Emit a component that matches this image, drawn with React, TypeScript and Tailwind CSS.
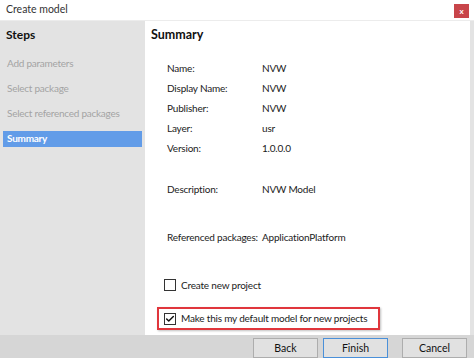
import { Check } from 'lucide-react';

const fields = [
  { label: 'Name:', value: 'NVW' },
  { label: 'Display Name:', value: 'NVW' },
  { label: 'Publisher:', value: 'NVW' },
  { label: 'Layer:', value: 'usr' },
  { label: 'Version:', value: '1.0.0.0' },
];

const steps = ['Add parameters', 'Select package', 'Select referenced packages'];

function Checkbox({ checked }: { checked?: boolean }) {
  return (
    <span className="w-[12px] h-[12px] border border-[#333] bg-white flex items-center justify-center shrink-0">
      {checked && <Check className="w-[10px] h-[10px] text-[#111]" strokeWidth={3.5} />}
    </span>
  );
}

function Button({ label, primary }: { label: string; primary?: boolean }) {
  return (
    <button
      className={
        'w-[65px] h-[20px] bg-[#e1e1e1] text-[10.5px] text-[#111] leading-none ' +
        (primary ? 'border border-[#4a90d9]' : 'border border-[#adadad]')
      }
    >
      {label}
    </button>
  );
}

export default function App() {
  return (
    <div
      className="w-[474px] h-[361px] bg-white flex flex-col text-[#1b1b1b] overflow-hidden whitespace-nowrap"
      style={{ fontFamily: 'Lato, "Open Sans", sans-serif' }}
    >
      <div className="h-[21px] flex items-center justify-between pl-[6px] pr-[5px] border-b border-[#ececec]">
        <span className="text-[10.5px] text-[#333]">Create model</span>
        <span className="w-[15px] h-[14px] bg-[#c8454a] text-white text-[8px] font-bold flex items-center justify-center leading-none mt-[2px]">
          x
        </span>
      </div>

      <div className="flex-1 flex min-h-0">
        <aside className="w-[145px] bg-[#e3e3e3] pt-[6px]">
          <h2 className="pl-[6px] text-[12px] font-bold leading-[16px] text-[#111]">Steps</h2>
          <ul className="mt-[8px] text-[10px] tracking-[-0.25px]">
            {steps.map((s) => (
              <li key={s} className="h-[25px] flex items-center pl-[7px] text-[#a3a3a3]">
                {s}
              </li>
            ))}
            <li className="h-[25px] flex items-center px-[3px]">
              <span className="w-full h-[16px] bg-[#629ce8] text-white font-bold flex items-center pl-[4px]">
                Summary
              </span>
            </li>
          </ul>
        </aside>

        <main className="flex-1 bg-white pt-[6px] text-[10px] tracking-[-0.2px]">
          <h2 className="pl-[6px] text-[12.5px] font-bold leading-[16px] text-[#111] tracking-normal">Summary</h2>
          <div className="pl-[22px] mt-[15px]">
            {fields.map((f) => (
              <div key={f.label} className="h-[20px] flex items-center">
                <span className="w-[95px]">{f.label}</span>
                <span>{f.value}</span>
              </div>
            ))}
            <div className="h-[20px] flex items-center mt-[21px]">
              <span className="w-[95px]">Description:</span>
              <span>NVW Model</span>
            </div>
            <div className="h-[20px] flex items-center mt-[28px]">
              <span className="w-[95px]">Referenced packages:</span>
              <span>ApplicationPlatform</span>
            </div>
          </div>

          <div className="pl-[19px] mt-[28px] h-[20px] flex items-center gap-[5px]">
            <Checkbox />
            <span>Create new project</span>
          </div>

          <div className="ml-[12px] mt-[12px] w-[223px] h-[23px] border-2 border-[#e0363c] shadow-[1px_1px_2px_rgba(0,0,0,0.25)] flex items-center gap-[5px] pl-[5px]">
            <Checkbox checked />
            <span>Make this my default model for new projects</span>
          </div>
        </main>

        <div className="w-[4px] bg-[#e3e3e3]" />
      </div>

      <div className="h-[23px] bg-[#d6d6d6] flex items-start justify-end pt-[3px] pr-[7px]">
        <div className="flex">
          <Button label="Back" />
          <span className="w-[5px]" />
          <Button label="Finish" primary />
          <span className="w-[14px]" />
          <Button label="Cancel" />
        </div>
      </div>
      <div className="h-[3px] bg-white" />
    </div>
  );
}
